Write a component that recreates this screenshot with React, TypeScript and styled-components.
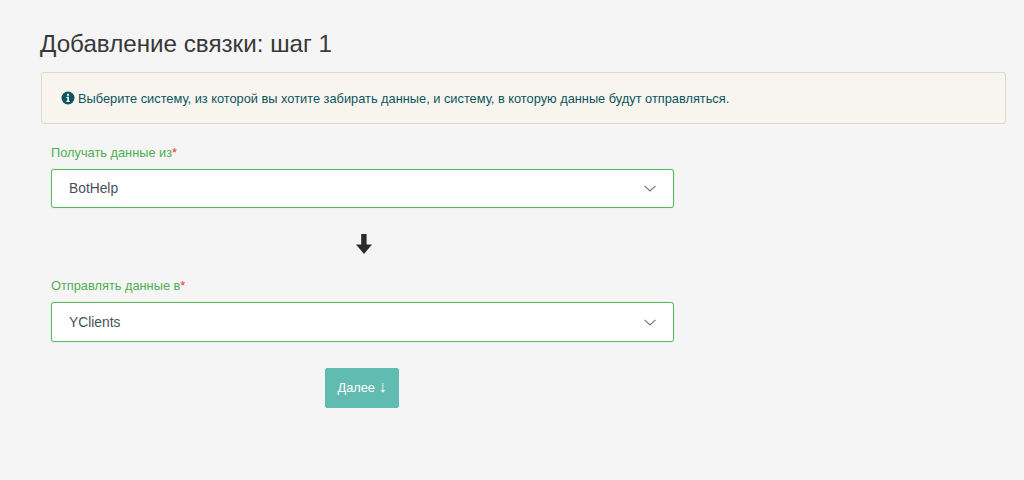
import React from 'react';
import styled, { createGlobalStyle } from 'styled-components';

const GlobalStyle = createGlobalStyle`
  html, body {
    margin: 0;
    padding: 0;
    background: #f5f5f5;
    font-family: "Liberation Sans", Arial, sans-serif;
  }
`;

const Page = styled.main`
  width: 1024px;
  height: 480px;
  box-sizing: border-box;
  padding: 29px 18px 0 40px;
  overflow: hidden;
`;

const Title = styled.h2`
  margin: 0 0 13px;
  font-size: 24.2px;
  line-height: 30px;
  font-weight: 400;
  color: #383838;
`;

const Alert = styled.div`
  display: flex;
  align-items: center;
  gap: 3px;
  box-sizing: border-box;
  height: 52px;
  margin-left: 1px;
  padding: 0 19px;
  background: #f8f5ee;
  border: 1px solid #d9dccb;
  border-radius: 3px;
  color: #0c5460;
  font-size: 12.8px;
`;

const Form = styled.form`
  display: flex;
  flex-direction: column;
  width: 623px;
  margin: 21px 0 0 11px;
`;

const Label = styled.label`
  display: block;
  height: 15px;
  margin-bottom: 9px;
  line-height: 15px;
  font-size: 12.8px;
  color: #4fae54;
`;

const Required = styled.span`
  color: #e33;
`;

const Select = styled.div<{ $height: number }>`
  display: flex;
  align-items: center;
  justify-content: space-between;
  box-sizing: border-box;
  height: ${(p) => p.$height}px;
  padding: 0 17px;
  background: #fff;
  border: 1px solid #5cb85c;
  border-radius: 3px;
  box-shadow: 0 0 1px rgba(92, 184, 92, 0.6);
  font-size: 13.8px;
  color: #495057;
`;

const ArrowRow = styled.div`
  display: flex;
  justify-content: center;
  align-items: center;
  height: 70px;
  padding-left: 2px;
  padding-bottom: 3px;
  padding-top: 4px;
  box-sizing: border-box;
`;

const ButtonRow = styled.div`
  display: flex;
  justify-content: center;
  margin-top: 26px;
  padding-right: 1px;
`;

const Button = styled.button`
  width: 74px;
  height: 40px;
  padding: 0 0 2px;
  border: 1px solid #5fbcb0;
  border-radius: 2px;
  background: #62bbb0;
  color: #fff;
  font-family: inherit;
  font-size: 12.8px;
`;

const ButtonArrow = styled.span`
  font-size: 16px;
`;

const Chevron = () => (
  <svg width="12" height="7" viewBox="0 0 12 7" fill="none" stroke="#6c757d" strokeWidth="1.1">
    <path d="M.5.8 6 6l5.500-5.200" />
  </svg>
);

const InfoIcon = () => (
  <svg width="14" height="14" viewBox="0 0 14 14">
    <circle cx="7" cy="7" r="6.500" fill="#0c5460" />
    <rect x="6" y="2.800" width="2" height="2" fill="#f8f5ee" />
    <path d="M5.400 5.800H8v4h.8v1.200H5.400V9.800h.8V7h-.8z" fill="#f8f5ee" />
  </svg>
);

const DownArrow = () => (
  <svg width="18" height="22" viewBox="0 0 18 22" fill="#2b2b2b">
    <path d="M6.200 1h5.400v10.500H17L9 21 1 11.500h5.200z" />
  </svg>
);

export default function App() {
  return (
    <Page>
      <GlobalStyle />
      <Title>Добавление связки: шаг 1</Title>
      <Alert>
        <InfoIcon />
        <span>Выберите систему, из которой вы хотите забирать данные, и систему, в которую данные будут отправляться.</span>
      </Alert>
      <Form>
        <Label>
          Получать данные из<Required>*</Required>
        </Label>
        <Select $height={39}>
          BotHelp
          <Chevron />
        </Select>
        <ArrowRow>
          <DownArrow />
        </ArrowRow>
        <Label>
          Отправлять данные в<Required>*</Required>
        </Label>
        <Select $height={40}>
          YClients
          <Chevron />
        </Select>
        <ButtonRow>
          <Button type="button">
            Далее <ButtonArrow>↓</ButtonArrow>
          </Button>
        </ButtonRow>
      </Form>
    </Page>
  );
}
